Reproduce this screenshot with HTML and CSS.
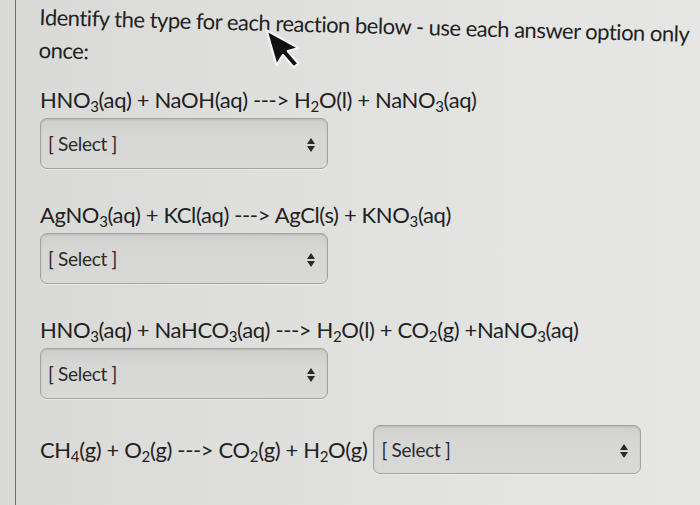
FILE: index.html
```html
<!DOCTYPE html>
<html lang="en">
<head>
<meta charset="utf-8">
<title>Identify the reaction type</title>
<link rel="stylesheet" href="styles.css">
</head>
<body>
<div class="frame">
  <div class="question">
    <p class="prompt">Identify the type for each reaction below - use each answer option only once:</p>

    <div class="item">
      <p class="eq">HNO<sub>3</sub>(aq) + NaOH(aq) ---&gt; H<sub>2</sub>O(l) + NaNO<sub>3</sub>(aq)</p>
      <div class="select"><span class="label">[ Select ]</span><svg class="arrows" viewBox="0 0 8 14" width="8" height="14"><path d="M0 6 L4 0 L8 6 Z M0 8 L8 8 L4 14 Z"/></svg></div>
    </div>

    <div class="item">
      <p class="eq">AgNO<sub>3</sub>(aq) + KCl(aq) ---&gt; AgCl(s) + KNO<sub>3</sub>(aq)</p>
      <div class="select"><span class="label">[ Select ]</span><svg class="arrows" viewBox="0 0 8 14" width="8" height="14"><path d="M0 6 L4 0 L8 6 Z M0 8 L8 8 L4 14 Z"/></svg></div>
    </div>

    <div class="item">
      <p class="eq">HNO<sub>3</sub>(aq) + NaHCO<sub>3</sub>(aq) ---&gt; H<sub>2</sub>O(l) + CO<sub>2</sub>(g) +NaNO<sub>3</sub>(aq)</p>
      <div class="select"><span class="label">[ Select ]</span><svg class="arrows" viewBox="0 0 8 14" width="8" height="14"><path d="M0 6 L4 0 L8 6 Z M0 8 L8 8 L4 14 Z"/></svg></div>
    </div>

    <div class="item inline">
      <p class="eq">CH<sub>4</sub>(g) + O<sub>2</sub>(g) ---&gt; CO<sub>2</sub>(g) + H<sub>2</sub>O(g)</p>
      <div class="select wide"><span class="label">[ Select ]</span><svg class="arrows" viewBox="0 0 8 14" width="8" height="14"><path d="M0 6 L4 0 L8 6 Z M0 8 L8 8 L4 14 Z"/></svg></div>
    </div>
  </div>
</div>
<svg class="cursor" viewBox="-1 -1 14 22" width="32" height="50"><path d="M0 0 L0 16 L4 12.5 L7 19 L9.5 18 L6.5 11.5 L11.5 11.5 Z" fill="#111" stroke="#f4f4f4" stroke-width="1" stroke-linejoin="round"/></svg>
</body>
</html>
```
FILE: styles.css
```css
html, body {
  margin: 0;
  padding: 0;
}

body {
  position: relative;
  width: 700px;
  height: 505px;
  overflow: hidden;
  background: linear-gradient(90deg, #d9d9d7 0%, #dfdfdd 40%, #e4e4e2 75%, #e6e6e4 100%);
  font-family: Lato, "Open Sans", sans-serif;
  color: #222;
}

.frame {
  margin-left: 15px;
  height: 505px;
  border-left: 1.5px solid #6e6e6c;
  padding-left: 24px;
}

.question {
  display: flex;
  flex-direction: column;
}

.prompt {
  margin: 0;
  width: 660px;
  font-size: 22px;
  line-height: 33px;
  letter-spacing: -0.5px;
  transform: rotate(1.5deg);
  transform-origin: 0 0;
}

.item {
  display: flex;
  flex-direction: column;
  align-items: flex-start;
  gap: 5px;
  margin-top: 33px;
}

.item:first-of-type {
  margin-top: 21px;
}

.item.inline {
  flex-direction: row;
  align-items: center;
  gap: 6px;
  margin-top: 26px;
}

.eq {
  margin: 0;
  font-size: 22px;
  line-height: 26px;
  letter-spacing: -0.35px;
  white-space: nowrap;
}

.eq sub {
  font-size: 15px;
  line-height: 0;
  vertical-align: -4px;
}

.select {
  box-sizing: border-box;
  width: 288px;
  height: 51px;
  display: flex;
  align-items: center;
  justify-content: space-between;
  padding: 0 12px 0 7px;
  border: 1.5px solid #a3a3a1;
  border-radius: 7px;
  background: linear-gradient(180deg, #cfcfcd 0%, #d6d6d4 30%, #d9d9d7 100%);
  box-shadow: inset 0 1px 2px rgba(0, 0, 0, 0.12), 0 1px 0 rgba(255, 255, 255, 0.4);
}

.select.wide {
  width: 268px;
  height: 49px;
}

.label {
  font-size: 19px;
  letter-spacing: -0.3px;
  color: #2a2a2a;
}

.arrows {
  fill: #2a2a2a;
  margin-top: 2px;
}

.cursor {
  position: absolute;
  left: 264px;
  top: 28px;
  transform: rotate(-16deg);
  transform-origin: 2px 2px;
}
```
